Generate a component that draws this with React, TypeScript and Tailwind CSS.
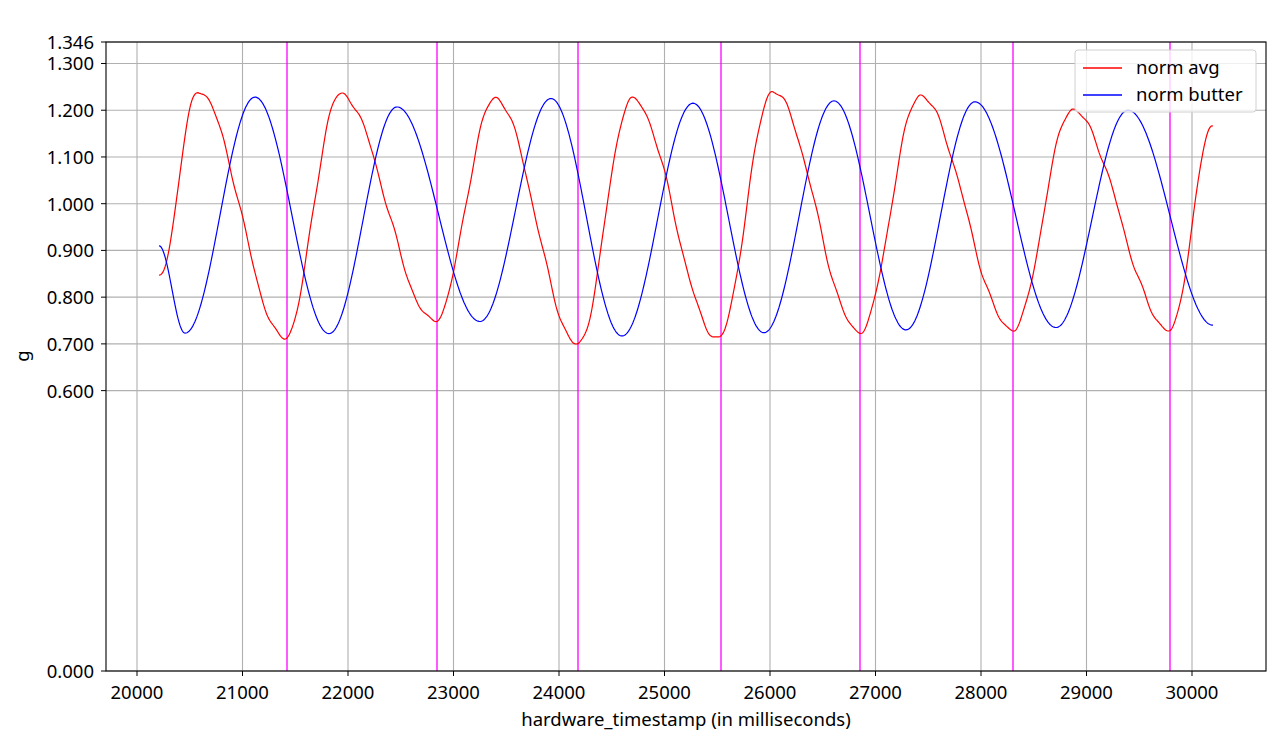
import React from "react";

const X0 = 137, XS = 0.1055; // px per ms
const Y0 = 671, YS = 629 / 1.346;
const px = (t: number) => X0 + (t - 20000) * XS;
const py = (g: number) => Y0 - g * YS;

function curve(ext: [number, number][], noise: number) {
  const pts: string[] = [];
  for (let i = 0; i < ext.length - 1; i++) {
    const [xa, ya] = ext[i], [xb, yb] = ext[i + 1];
    const n = Math.max(2, Math.round(xb - xa));
    for (let k = 0; k <= n; k++) {
      if (i > 0 && k === 0) continue;
      const u = k / n;
      const e = (1 - Math.cos(Math.PI * u)) / 2;
      const x = xa + (xb - xa) * u;
      let y = ya + (yb - ya) * e;
      if (noise) y += noise * Math.sin(x * 0.21) * Math.sin(Math.PI * u) + noise * 0.5 * Math.sin(x * 0.37);
      pts.push(`${x.toFixed(1)},${py(y).toFixed(1)}`);
    }
  }
  return pts.join(" ");
}

const blue: [number, number][] = [
  [159, 0.91], [185, 0.723], [255, 1.228], [329, 0.722], [397, 1.207], [480, 0.748], [551, 1.225],
  [622, 0.717], [693, 1.215], [764, 0.724], [834, 1.22], [906, 0.73], [975, 1.218], [1056, 0.735],
  [1128, 1.2], [1213, 0.74],
];
const red: [number, number][] = [
  [159, 0.845], [198, 1.24], [285, 0.713], [340, 1.235], [435, 0.75], [495, 1.225], [578, 0.70],
  [632, 1.225], [718, 0.712], [773, 1.24], [860, 0.725], [920, 1.23], [1013, 0.73], [1072, 1.2],
  [1170, 0.73], [1213, 1.165],
];

const yt = [1.346, 1.3, 1.2, 1.1, 1.0, 0.9, 0.8, 0.7, 0.6, 0.0];
const xt = Array.from({ length: 11 }, (_, i) => 20000 + i * 1000);
const mag = [287, 437, 578, 721, 860, 1013, 1170];

export default function App() {
  return (
    <div className="w-[1280px] h-[742px] bg-white font-['DejaVu_Sans',sans-serif]">
      <svg width="1280" height="742" viewBox="0 0 1280 742">
        <g stroke="#b0b0b0" strokeWidth="1.1">
          {xt.map((t) => <line key={t} x1={px(t)} x2={px(t)} y1={42} y2={671} />)}
          {yt.map((g) => <line key={g} x1={106} x2={1266} y1={py(g)} y2={py(g)} />)}
        </g>
        <g stroke="#ff00ff" strokeWidth="1.3">
          {mag.map((x) => <line key={x} x1={x} x2={x} y1={42} y2={671} />)}
        </g>
        <polyline points={curve(red, 0.006)} fill="none" stroke="#ff0000" strokeWidth="1.2" />
        <polyline points={curve(blue, 0)} fill="none" stroke="#0000ff" strokeWidth="1.2" />
        <rect x={106} y={42} width={1160} height={629} fill="none" stroke="#000" strokeWidth="1.1" />
        <g stroke="#000" strokeWidth="1">
          {xt.map((t) => <line key={t} x1={px(t)} x2={px(t)} y1={671} y2={676} />)}
          {yt.map((g) => <line key={g} x1={101} x2={106} y1={py(g)} y2={py(g)} />)}
        </g>
        <g fontSize="18.5" fill="#000">
          {xt.map((t) => <text key={t} x={px(t)} y={699} textAnchor="middle">{t}</text>)}
          {yt.map((g) => <text key={g} x={94} y={py(g) + 7} textAnchor="end">{g.toFixed(3)}</text>)}
          <text x={686} y={726} textAnchor="middle">hardware_timestamp (in milliseconds)</text>
          <text x={0} y={0} textAnchor="middle" transform="translate(29 356) rotate(-90)">g</text>
        </g>
        <rect x={1075} y={50} width={181} height={62} rx={3} fill="#fff" fillOpacity="0.8" stroke="#d0d0d0" />
        <line x1={1083} x2={1122} y1={68} y2={68} stroke="#ff0000" strokeWidth="1.3" />
        <line x1={1083} x2={1122} y1={95} y2={95} stroke="#0000ff" strokeWidth="1.3" />
        <g fontSize="18.5" fill="#000">
          <text x={1136} y={74}>norm avg</text>
          <text x={1136} y={101}>norm butter</text>
        </g>
      </svg>
    </div>
  );
}
